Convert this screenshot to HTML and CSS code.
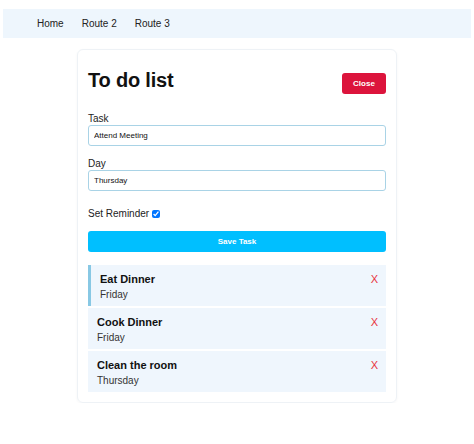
FILE: index.html
```html
<!DOCTYPE html>
<html lang="en">
<head>
  <meta charset="UTF-8">
  <title>Task Tracker</title>
  <meta name="viewport" content="width=device-width, initial-scale=1.0">
  <link rel="stylesheet" href="styles.css">
</head>
<body>
  <nav class="nav">
    <a href="#">Home</a>
    <a href="#">Route 2</a>
    <a href="#">Route 3</a>
  </nav>

  <div class="container">
    <header class="header">
      <h1>To do list</h1>
      <button class="btn btn-close">Close</button>
    </header>

    <form class="add-form">
      <div class="form-control">
        <label for="task">Task</label>
        <input type="text" id="task" value="Attend Meeting">
      </div>
      <div class="form-control">
        <label for="day">Day</label>
        <input type="text" id="day" value="Thursday">
      </div>
      <div class="form-check">
        <label for="reminder">Set Reminder</label>
        <input type="checkbox" id="reminder" checked>
      </div>
      <button type="button" class="btn btn-save">Save Task</button>
    </form>

    <div class="tasks">
      <div class="task reminder">
        <h3>Eat Dinner <span class="del">X</span></h3>
        <p>Friday</p>
      </div>
      <div class="task">
        <h3>Cook Dinner <span class="del">X</span></h3>
        <p>Friday</p>
      </div>
      <div class="task">
        <h3>Clean the room <span class="del">X</span></h3>
        <p>Thursday</p>
      </div>
    </div>
  </div>
</body>
</html>
```

FILE: styles.css
```css
* {
  box-sizing: border-box;
}

body {
  margin: 0;
  background: #fff;
  color: #222;
  font-family: 'Liberation Sans', Arial, sans-serif;
}

.nav {
  margin: 9px 3px 0;
  height: 29px;
  padding-left: 34px;
  background: #eef6fd;
  display: flex;
  align-items: center;
  gap: 18px;
}

.nav a {
  color: #222;
  font-size: 10px;
  text-decoration: none;
}

.container {
  width: 320px;
  margin: 11px auto 0;
  padding: 18px 10px 10px;
  border: 1px solid #eef2f6;
  border-radius: 6px;
  box-shadow: 0 1px 3px rgba(0, 0, 0, 0.04);
}

.header {
  display: flex;
  justify-content: space-between;
  align-items: flex-start;
  margin-bottom: 18px;
}

.header h1 {
  margin: 0;
  font-size: 20px;
  line-height: 25px;
  letter-spacing: -0.2px;
  color: #111;
}

.btn {
  border: none;
  border-radius: 3px;
  color: #fff;
  font-family: inherit;
  font-size: 8px;
  font-weight: bold;
  cursor: pointer;
}

.btn-close {
  margin-top: 5px;
  width: 44px;
  height: 21px;
  background: #dc143c;
}

.form-control {
  margin-bottom: 11px;
}

.form-control label {
  display: block;
  font-size: 10px;
  line-height: 13px;
  color: #222;
}

.form-control input {
  display: block;
  width: 100%;
  height: 21px;
  padding: 0 5px;
  border: 1px solid #a9d3e6;
  border-radius: 3px;
  font-family: inherit;
  font-size: 8px;
  color: #111;
}

.form-check {
  margin-top: 16px;
  display: flex;
  align-items: center;
  gap: 3px;
  font-size: 10px;
  line-height: 13px;
}

.form-check input {
  margin: 0;
  width: 8px;
  height: 8px;
}

.btn-save {
  display: block;
  width: 100%;
  height: 21px;
  margin-top: 11px;
  background: #00bfff;
}

.tasks {
  margin-top: 13px;
  display: flex;
  flex-direction: column;
  gap: 2px;
}

.task {
  background: #eff6fd;
  padding: 7px 8px 5px 9px;
  height: 41px;
}

.task.reminder {
  border-left: 3px solid #88c8e4;
  padding-left: 9px;
}

.task h3 {
  margin: 0 0 2px;
  display: flex;
  justify-content: space-between;
  align-items: center;
  font-size: 11px;
  line-height: 14px;
  color: #111;
}

.task p {
  margin: 0;
  font-size: 10px;
  line-height: 13px;
  color: #333;
}

.del {
  color: #e8343e;
  font-weight: normal;
  font-size: 11px;
  cursor: pointer;
}
```
